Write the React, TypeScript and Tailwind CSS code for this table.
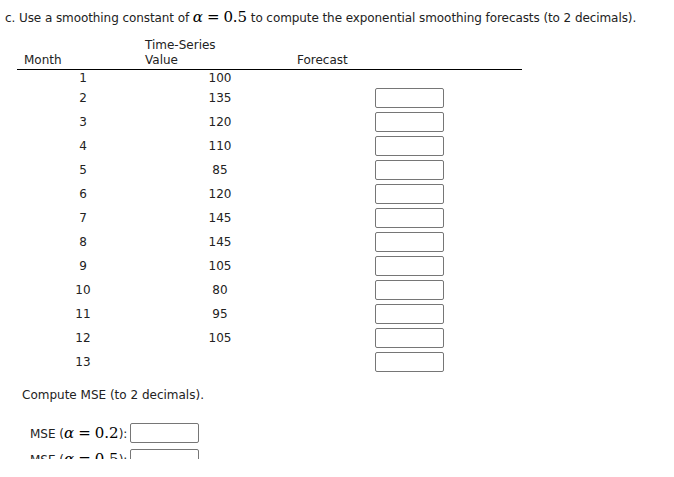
import React from "react";

const rows = [
  { month: 1, value: "100", input: false },
  { month: 2, value: "135", input: true },
  { month: 3, value: "120", input: true },
  { month: 4, value: "110", input: true },
  { month: 5, value: "85", input: true },
  { month: 6, value: "120", input: true },
  { month: 7, value: "145", input: true },
  { month: 8, value: "145", input: true },
  { month: 9, value: "105", input: true },
  { month: 10, value: "80", input: true },
  { month: 11, value: "95", input: true },
  { month: 12, value: "105", input: true },
  { month: 13, value: "", input: true },
];

// inline math bits, the page renders them in a serif face
function Alpha({ value }: { value: string }) {
  return (
    <span className="font-['DejaVu_Serif',serif] text-[15px] text-black">
      <span className="italic">α</span>
      <span className="mx-[4px]">=</span>
      {value}
    </span>
  );
}

function Box({ className = "" }: { className?: string }) {
  return (
    <input
      type="text"
      className={`h-[20px] w-[69px] rounded-[2px] border border-[#767676] bg-white ${className}`}
    />
  );
}

export default function App() {
  return (
    <div className="h-[459px] overflow-hidden bg-white font-['DejaVu_Sans',sans-serif] text-[12px] text-[#222]">
      <p className="pl-[5px] pt-[8px] leading-[18px] tracking-[-0.08px]">
        c. Use a smoothing constant of <Alpha value="0.5" /> to compute the
        exponential smoothing forecasts (to 2 decimals).
      </p>

      <div className="ml-[17px] mt-[11px] w-[505px]">
        <div className="flex items-end border-b border-black pb-[1px] leading-[15px]">
          <div className="w-[128px] pl-[7px]">Month</div>
          <div className="w-[152px]">
            Time-Series
            <br />
            Value
          </div>
          <div>Forecast</div>
        </div>

        {rows.map((r) => (
          <div
            key={r.month}
            className={`flex items-center ${r.input ? "h-[24px]" : "h-[16px]"}`}
          >
            <div className="w-[132px] text-center">{r.month}</div>
            <div className="w-[142px] text-center">{r.value}</div>
            <div className="w-[84px]" />
            {r.input && <Box />}
          </div>
        ))}
      </div>

      <p className="ml-[22px] mt-[13px] leading-[16px]">
        Compute MSE (to 2 decimals).
      </p>

      <div className="ml-[30px] mt-[20px] flex flex-col gap-[6px]">
        <div className="flex h-[20px] items-center gap-[3px]">
          <span className="leading-[20px]">
            MSE (<Alpha value="0.2" />
            ):
          </span>
          <Box />
        </div>
        <div className="flex h-[20px] items-center gap-[3px]">
          <span className="leading-[20px]">
            MSE (<Alpha value="0.5" />
            ):
          </span>
          <Box />
        </div>
      </div>
    </div>
  );
}
